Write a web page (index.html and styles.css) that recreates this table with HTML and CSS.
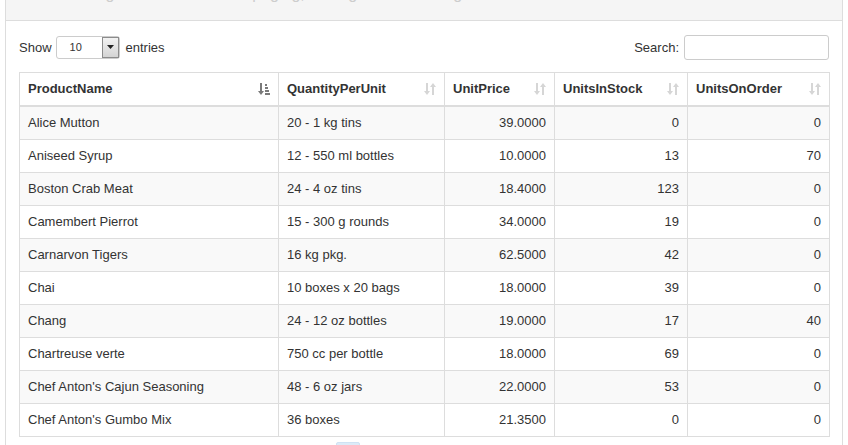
FILE: index.html
```html
<!DOCTYPE html>
<html>
<head>
<meta charset="utf-8">
<link rel="stylesheet" href="styles.css">
</head>
<body>
<div class="panel">
  <div class="panel-heading">Products list grid with server side paging, sorting and searching data</div>
  <div class="panel-body">
    <div class="controls">
      <div class="length">
        <span>Show</span>
        <div class="select"><span class="val">10</span><span class="arrow"><svg width="7" height="4" viewBox="0 0 7 4"><path d="M0 0H7L3.5 4Z" fill="#222"/></svg></span></div>
        <span>entries</span>
      </div>
      <div class="search">
        <span>Search:</span>
        <div class="input"></div>
      </div>
    </div>
    <table class="grid">
      <colgroup>
        <col class="c1"><col class="c2"><col class="c3"><col class="c4"><col class="c5">
      </colgroup>
      <thead>
        <tr>
          <th><div class="th"><span>ProductName</span><svg class="sort on" width="12" height="12" viewBox="0 0 12 12"><path d="M2 0h2v8h2L3 12 0 8h2z" fill="#7a7a7a"/><rect x="7" y="1" width="2" height="2" fill="#7a7a7a"/><rect x="7" y="4" width="3" height="2" fill="#7a7a7a"/><rect x="7" y="7" width="4" height="2" fill="#7a7a7a"/><rect x="7" y="10" width="5" height="2" fill="#7a7a7a"/></svg></div></th>
          <th><div class="th"><span>QuantityPerUnit</span><svg class="sort" width="12" height="12" viewBox="0 0 12 12"><path d="M2 0h2v8h2L3 12 0 8h2z M8 12h2V4h2L9 0 6 4h2z" fill="#d6d6d6"/></svg></div></th>
          <th><div class="th"><span>UnitPrice</span><svg class="sort" width="12" height="12" viewBox="0 0 12 12"><path d="M2 0h2v8h2L3 12 0 8h2z M8 12h2V4h2L9 0 6 4h2z" fill="#d6d6d6"/></svg></div></th>
          <th><div class="th"><span>UnitsInStock</span><svg class="sort" width="12" height="12" viewBox="0 0 12 12"><path d="M2 0h2v8h2L3 12 0 8h2z M8 12h2V4h2L9 0 6 4h2z" fill="#d6d6d6"/></svg></div></th>
          <th><div class="th"><span>UnitsOnOrder</span><svg class="sort" width="12" height="12" viewBox="0 0 12 12"><path d="M2 0h2v8h2L3 12 0 8h2z M8 12h2V4h2L9 0 6 4h2z" fill="#d6d6d6"/></svg></div></th>
        </tr>
      </thead>
      <tbody>
        <tr><td>Alice Mutton</td><td>20 - 1 kg tins</td><td class="r">39.0000</td><td class="r">0</td><td class="r">0</td></tr>
        <tr><td>Aniseed Syrup</td><td>12 - 550 ml bottles</td><td class="r">10.0000</td><td class="r">13</td><td class="r">70</td></tr>
        <tr><td>Boston Crab Meat</td><td>24 - 4 oz tins</td><td class="r">18.4000</td><td class="r">123</td><td class="r">0</td></tr>
        <tr><td>Camembert Pierrot</td><td>15 - 300 g rounds</td><td class="r">34.0000</td><td class="r">19</td><td class="r">0</td></tr>
        <tr><td>Carnarvon Tigers</td><td>16 kg pkg.</td><td class="r">62.5000</td><td class="r">42</td><td class="r">0</td></tr>
        <tr><td>Chai</td><td>10 boxes x 20 bags</td><td class="r">18.0000</td><td class="r">39</td><td class="r">0</td></tr>
        <tr><td>Chang</td><td>24 - 12 oz bottles</td><td class="r">19.0000</td><td class="r">17</td><td class="r">40</td></tr>
        <tr><td>Chartreuse verte</td><td>750 cc per bottle</td><td class="r">18.0000</td><td class="r">69</td><td class="r">0</td></tr>
        <tr><td>Chef Anton's Cajun Seasoning</td><td>48 - 6 oz jars</td><td class="r">22.0000</td><td class="r">53</td><td class="r">0</td></tr>
        <tr><td>Chef Anton's Gumbo Mix</td><td>36 boxes</td><td class="r">21.3500</td><td class="r">0</td><td class="r">0</td></tr>
      </tbody>
    </table>
    <div class="footer">
      <div class="pager"><span class="pg active"></span></div>
    </div>
  </div>
</div>
</body>
</html>
```

FILE: styles.css
```css
html, body {
  margin: 0;
  padding: 0;
  background: #fff;
  overflow: hidden;
}
body {
  font-family: "Liberation Sans", Arial, sans-serif;
  font-size: 13px;
  color: #333;
}
.panel {
  margin: -10px 5px 0 5px;
  border: 1px solid #ddd;
  border-radius: 4px;
  background: #fff;
}
.panel-heading {
  background: #f5f5f5;
  border-bottom: 1px solid #ddd;
  padding: 0 8px;
  height: 30px;
  box-sizing: border-box;
  font-size: 16px;
  line-height: 6px;
  color: #cdcdcd;
  white-space: nowrap;
}
.panel-body {
  padding: 14px 13px 0 13px;
}
.controls {
  display: flex;
  justify-content: space-between;
  align-items: center;
  height: 24px;
}
.length, .search {
  display: flex;
  align-items: center;
  gap: 5px;
}
.length {
  gap: 4px;
}
.select {
  width: 64px;
  height: 23px;
  box-sizing: border-box;
  border: 1px solid #ccc;
  border-radius: 3px;
  display: flex;
  align-items: stretch;
  background: #fff;
  margin-right: 2px;
}
.select .val {
  flex: 1;
  padding-left: 13px;
  line-height: 21px;
  font-size: 11px;
}
.select .arrow {
  width: 15px;
  border: 1px solid #8c8c8c;
  background: linear-gradient(#f2f2f2, #d4d4d4);
  display: flex;
  align-items: center;
  justify-content: center;
}
.search .input {
  width: 145px;
  height: 25px;
  box-sizing: border-box;
  border: 1px solid #ccc;
  border-radius: 3px;
  background: #fff;
}
.grid {
  margin-top: 13px;
  width: 810px;
  table-layout: fixed;
  border-collapse: collapse;
  border: 1px solid #ddd;
}
.c1 { width: 259px; }
.c2 { width: 166px; }
.c3 { width: 110px; }
.c4 { width: 133px; }
.c5 { width: 142px; }
.grid th, .grid td {
  border: 1px solid #ddd;
  padding: 8px 8px;
  line-height: 16px;
  text-align: left;
  white-space: nowrap;
  overflow: hidden;
}
.grid th {
  font-weight: bold;
  border-bottom: 2px solid #ddd;
}
.th {
  display: flex;
  justify-content: space-between;
  align-items: center;
}
.sort {
  flex: none;
}
.grid tbody tr:nth-child(odd) td {
  background: #f9f9f9;
}
.grid td.r {
  text-align: right;
}
.footer {
  display: flex;
  padding-left: 317px;
  padding-top: 5px;
  height: 20px;
}
.pg {
  display: inline-block;
  width: 22px;
  height: 20px;
  border: 1px solid #cfe2f3;
  background: #dcebf8;
  border-radius: 2px;
}
```
